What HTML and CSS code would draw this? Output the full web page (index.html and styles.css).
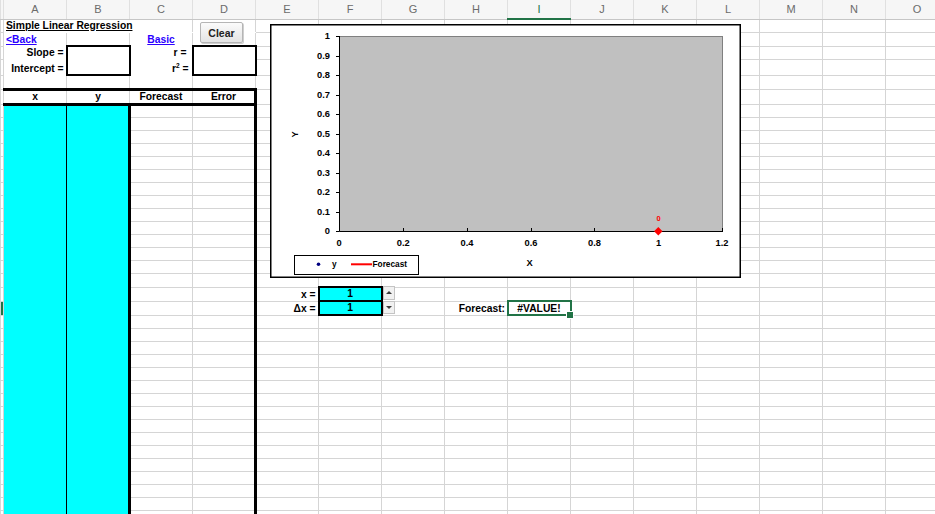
FILE: index.html
```html
<!DOCTYPE html>
<html lang="en">
<head>
<meta charset="utf-8">
<title>Simple Linear Regression</title>
<link rel="stylesheet" href="styles.css">
</head>
<body>
<div class="sheet">
<table class="grid">
<colgroup><col class="rh"><col class="c" span="15"></colgroup>
<thead>
<tr><th></th><th>A</th><th>B</th><th>C</th><th>D</th><th>E</th><th>F</th><th>G</th><th>H</th><th class="sel">I</th><th>J</th><th>K</th><th>L</th><th>M</th><th>N</th><th>O</th></tr>
</thead>
<tbody class="top">
<tr><td></td><td colspan="3" class="nb title">Simple Linear Regression</td><td class="nb"></td><td></td><td></td><td></td><td></td><td></td><td></td><td></td><td></td><td></td><td></td><td></td></tr>
<tr class="h14"><td></td><td class="nb"><a href="#">&lt;Back</a></td><td class="nb"></td><td class="nb ctr"><a href="#">Basic</a></td><td class="nb"></td><td></td><td></td><td></td><td></td><td></td><td></td><td></td><td></td><td></td><td></td><td></td></tr>
<tr><td></td><td class="nb rt">Slope =</td><td rowspan="2" class="box"></td><td class="nb rt rc">r =</td><td rowspan="2" class="box"></td><td></td><td></td><td></td><td></td><td></td><td></td><td></td><td></td><td></td><td></td><td></td></tr>
<tr class="r4"><td></td><td class="nb rt">Intercept =</td><td class="nb rt rc2">r<sup>2</sup> =</td><td></td><td></td><td></td><td></td><td></td><td></td><td></td><td></td><td></td><td></td><td></td></tr>
<tr class="h14"><td></td><td></td><td></td><td></td><td></td><td></td><td></td><td></td><td></td><td></td><td></td><td></td><td></td><td></td><td></td><td></td></tr>
<tr class="h14"><td></td><td class="ch">x</td><td class="ch">y</td><td class="ch">Forecast</td><td class="ch chr">Error</td><td></td><td></td><td></td><td></td><td></td><td></td><td></td><td></td><td></td><td></td><td></td></tr>
</tbody>
<tbody class="data">
<tr><td></td><td></td><td></td><td></td><td></td><td></td><td></td><td></td><td></td><td></td><td></td><td></td><td></td><td></td><td></td><td></td></tr>
<tr><td></td><td></td><td></td><td></td><td></td><td></td><td></td><td></td><td></td><td></td><td></td><td></td><td></td><td></td><td></td><td></td></tr>
<tr><td></td><td></td><td></td><td></td><td></td><td></td><td></td><td></td><td></td><td></td><td></td><td></td><td></td><td></td><td></td><td></td></tr>
<tr><td></td><td></td><td></td><td></td><td></td><td></td><td></td><td></td><td></td><td></td><td></td><td></td><td></td><td></td><td></td><td></td></tr>
<tr><td></td><td></td><td></td><td></td><td></td><td></td><td></td><td></td><td></td><td></td><td></td><td></td><td></td><td></td><td></td><td></td></tr>
<tr><td></td><td></td><td></td><td></td><td></td><td></td><td></td><td></td><td></td><td></td><td></td><td></td><td></td><td></td><td></td><td></td></tr>
<tr><td></td><td></td><td></td><td></td><td></td><td></td><td></td><td></td><td></td><td></td><td></td><td></td><td></td><td></td><td></td><td></td></tr>
<tr><td></td><td></td><td></td><td></td><td></td><td></td><td></td><td></td><td></td><td></td><td></td><td></td><td></td><td></td><td></td><td></td></tr>
<tr><td></td><td></td><td></td><td></td><td></td><td></td><td></td><td></td><td></td><td></td><td></td><td></td><td></td><td></td><td></td><td></td></tr>
<tr><td></td><td></td><td></td><td></td><td></td><td></td><td></td><td></td><td></td><td></td><td></td><td></td><td></td><td></td><td></td><td></td></tr>
<tr><td></td><td></td><td></td><td></td><td></td><td></td><td></td><td></td><td></td><td></td><td></td><td></td><td></td><td></td><td></td><td></td></tr>
<tr><td></td><td></td><td></td><td></td><td></td><td></td><td></td><td></td><td></td><td></td><td></td><td></td><td></td><td></td><td></td><td></td></tr>
<tr><td></td><td></td><td></td><td></td><td></td><td></td><td></td><td></td><td></td><td></td><td></td><td></td><td></td><td></td><td></td><td></td></tr>
<tr class="h14"><td></td><td></td><td></td><td></td><td></td><td></td><td></td><td></td><td></td><td></td><td></td><td></td><td></td><td></td><td></td><td></td></tr>
<tr class="h14"><td></td><td></td><td></td><td></td><td></td><td class="rt">x =</td><td class="val">1</td><td></td><td></td><td></td><td></td><td></td><td></td><td></td><td></td><td></td></tr>
<tr class="h14"><td class="selrow"></td><td></td><td></td><td></td><td></td><td class="rt">Δx =</td><td class="val">1</td><td></td><td class="rt">Forecast:</td><td class="cur">#VALUE!</td><td></td><td></td><td></td><td></td><td></td><td></td></tr>
<tr><td></td><td></td><td></td><td></td><td></td><td></td><td></td><td></td><td></td><td></td><td></td><td></td><td></td><td></td><td></td><td></td></tr>
<tr><td></td><td></td><td></td><td></td><td></td><td></td><td></td><td></td><td></td><td></td><td></td><td></td><td></td><td></td><td></td><td></td></tr>
<tr><td></td><td></td><td></td><td></td><td></td><td></td><td></td><td></td><td></td><td></td><td></td><td></td><td></td><td></td><td></td><td></td></tr>
<tr><td></td><td></td><td></td><td></td><td></td><td></td><td></td><td></td><td></td><td></td><td></td><td></td><td></td><td></td><td></td><td></td></tr>
<tr><td></td><td></td><td></td><td></td><td></td><td></td><td></td><td></td><td></td><td></td><td></td><td></td><td></td><td></td><td></td><td></td></tr>
<tr><td></td><td></td><td></td><td></td><td></td><td></td><td></td><td></td><td></td><td></td><td></td><td></td><td></td><td></td><td></td><td></td></tr>
<tr><td></td><td></td><td></td><td></td><td></td><td></td><td></td><td></td><td></td><td></td><td></td><td></td><td></td><td></td><td></td><td></td></tr>
<tr><td></td><td></td><td></td><td></td><td></td><td></td><td></td><td></td><td></td><td></td><td></td><td></td><td></td><td></td><td></td><td></td></tr>
<tr><td></td><td></td><td></td><td></td><td></td><td></td><td></td><td></td><td></td><td></td><td></td><td></td><td></td><td></td><td></td><td></td></tr>
<tr><td></td><td></td><td></td><td></td><td></td><td></td><td></td><td></td><td></td><td></td><td></td><td></td><td></td><td></td><td></td><td></td></tr>
<tr><td></td><td></td><td></td><td></td><td></td><td></td><td></td><td></td><td></td><td></td><td></td><td></td><td></td><td></td><td></td><td></td></tr>
<tr><td></td><td></td><td></td><td></td><td></td><td></td><td></td><td></td><td></td><td></td><td></td><td></td><td></td><td></td><td></td><td></td></tr>
<tr><td></td><td></td><td></td><td></td><td></td><td></td><td></td><td></td><td></td><td></td><td></td><td></td><td></td><td></td><td></td><td></td></tr>
<tr><td></td><td></td><td></td><td></td><td></td><td></td><td></td><td></td><td></td><td></td><td></td><td></td><td></td><td></td><td></td><td></td></tr>
<tr><td></td><td></td><td></td><td></td><td></td><td></td><td></td><td></td><td></td><td></td><td></td><td></td><td></td><td></td><td></td><td></td></tr>
<tr><td></td><td></td><td></td><td></td><td></td><td></td><td></td><td></td><td></td><td></td><td></td><td></td><td></td><td></td><td></td><td></td></tr>
<tr class="cut"><td></td><td></td><td></td><td></td><td></td><td></td><td></td><td></td><td></td><td></td><td></td><td></td><td></td><td></td><td></td><td></td></tr>
</tbody>
</table>

<button class="clear" type="button">Clear</button>

<div class="chart">
<svg width="471" height="254" viewBox="0 0 471 254">
<rect class="frame" x="0.75" y="0.75" width="469.5" height="252.5"/>
<rect class="plot" x="69.5" y="12.5" width="383" height="195"/>
<path class="axis" d="M69.5 12V207.5H453"/>
<path class="tick" d="M66 12.5H69M66 32.5H69M66 51.5H69M66 71.5H69M66 90.5H69M66 110.5H69M66 129.5H69M66 149.5H69M66 168.5H69M66 188.5H69M66 207.5H69M133.5 204V207M197.5 204V207M261.5 204V207M324.5 204V207M388.5 204V207M452.5 204V207"/>
<g class="yl">
<text x="60" y="15.4">1</text>
<text x="60" y="34.9">0.9</text>
<text x="60" y="54.4">0.8</text>
<text x="60" y="73.9">0.7</text>
<text x="60" y="93.4">0.6</text>
<text x="60" y="112.9">0.5</text>
<text x="60" y="132.4">0.4</text>
<text x="60" y="151.9">0.3</text>
<text x="60" y="171.4">0.2</text>
<text x="60" y="190.9">0.1</text>
<text x="60" y="210.4">0</text>
</g>
<g class="xl">
<text x="69" y="222">0</text>
<text x="133.3" y="222">0.2</text>
<text x="197" y="222">0.4</text>
<text x="261" y="222">0.6</text>
<text x="324.5" y="222">0.8</text>
<text x="388.5" y="222">1</text>
<text x="452" y="222">1.2</text>
</g>
<text class="ttl" x="259.7" y="242">X</text>
<text class="ttl" transform="translate(28.3,110.5) rotate(-90)">Y</text>
<polygon class="mk" points="388.3,203 392.5,207.3 388.3,211.6 384.1,207.3"/>
<text class="dl" x="388.6" y="196.5">0</text>
<rect class="legend" x="24.5" y="231.5" width="124" height="19"/>
<circle class="dot" cx="48.5" cy="240.3" r="1.8"/>
<text class="lg" x="62" y="243.2">y</text>
<path class="fline" d="M81 240.3H102"/>
<text class="lg" x="102.5" y="243.2">Forecast</text>
</svg>
</div>

<div class="spin"><span class="up"></span><span class="dn"></span></div>
</div>
</body>
</html>
```

FILE: styles.css
```css
* { box-sizing: border-box; }
html, body { margin: 0; padding: 0; background: #fff; }
body {
  width: 935px;
  height: 514px;
  overflow: hidden;
  font-family: "Liberation Sans", Arial, sans-serif;
}
.sheet { position: relative; width: 948px; }

.grid {
  border-collapse: collapse;
  table-layout: fixed;
  width: 948px;
}
.grid col.rh { width: 3px; }
.grid col.c { width: 63px; }

.grid th {
  height: 19px;
  padding: 0;
  font-family: "Liberation Sans", Arial, sans-serif;
  font-size: 11px;
  font-weight: normal;
  color: #6b6b6b;
  background: #f6f6f6;
  border: 1px solid #e0e0e0;
  border-top: 0;
  border-bottom-color: #c6c6c6;
  text-align: center;
  vertical-align: middle;
}
.grid th.sel { color: #217346; border-bottom: 2px solid #217346; }

.grid tr { height: 13px; }
.grid tr.h14 { height: 14px; }
.grid tr.r4 { height: 16px; }
.grid tr.cut { height: 4px; }
.grid tr.cut td { line-height: 0; font-size: 0; border-bottom: 0; }

.grid td {
  padding: 0 2px;
  border: 1px solid #d5d5d5;
  font-size: 10.3px;
  font-weight: bold;
  line-height: 12px;
  vertical-align: bottom;
  white-space: nowrap;
  overflow: hidden;
  color: #000;
}
.grid td:first-child { padding: 0; }
.grid td.nb { border-bottom-color: #fff; }
.grid td.title { text-decoration: underline; }
.grid td.rt { text-align: right; }
.grid td.rc { padding-right: 5px; }
.grid td.rc2 { padding-right: 3px; }
.grid td.ctr { text-align: center; }
.grid a { color: #2b00ff; text-decoration: underline; }
.grid sup { font-size: 6.5px; line-height: 0; vertical-align: 4px; }
.grid td.box { border: 2px solid #000; }

.grid td.ch {
  text-align: center;
  border-top: 3px solid #000;
  border-bottom: 3px solid #000;
}
.grid td.chr { border-right: 3px solid #000; }

.data td:nth-child(2),
.data td:nth-child(3) {
  background: #00ffff;
  border-top-color: #00ffff;
  border-bottom-color: #00ffff;
}
.data td:nth-child(2) { border-right: 1px double #000; }
.data td:nth-child(3) { border-right: 3px solid #000; }
.data td:nth-child(5) { border-right: 3px solid #000; }

.grid td.val {
  background: #00ffff;
  border: 2px solid #000;
  text-align: center;
}
.grid td.selrow { background: #217346; }
.grid td.cur {
  text-align: center;
  outline: 2px solid #217346;
  outline-offset: -1px;
  position: relative;
  overflow: visible;
}
.grid td.cur::after {
  content: "";
  position: absolute;
  right: -4px;
  bottom: -4px;
  width: 6px;
  height: 6px;
  background: #217346;
  border: 1px solid #fff;
}

.clear {
  position: absolute;
  left: 200px;
  top: 22px;
  width: 43px;
  height: 21px;
  padding: 0;
  border: 1px solid #b5b5b5;
  border-radius: 2px;
  background: linear-gradient(#fbfbfb, #e4e4e4);
  box-shadow: 1px 1px 0 #cfcfcf;
  font-family: "Liberation Sans", Arial, sans-serif;
  font-size: 10.5px;
  font-weight: bold;
  color: #222;
}

.chart {
  position: absolute;
  left: 270px;
  top: 24px;
  width: 471px;
  height: 254px;
}
.chart svg { display: block; }
.chart text {
  font-family: "Liberation Sans", Arial, sans-serif;
  font-weight: bold;
  font-size: 9.3px;
  fill: #000;
}
.chart .yl text { text-anchor: end; }
.chart .xl text { text-anchor: middle; }
.chart .ttl { text-anchor: middle; }
.chart .frame { fill: #fff; stroke: #000; stroke-width: 1.5; }
.chart .plot { fill: #c0c0c0; stroke: #808080; stroke-width: 1; }
.chart .axis { fill: none; stroke: #000; stroke-width: 1; }
.chart .tick { fill: none; stroke: #000; stroke-width: 1; }
.chart .mk { fill: #ff0000; }
.chart .dl { font-size: 7.5px; fill: #ff0000; text-anchor: middle; }
.chart .legend { fill: #fff; stroke: #000; stroke-width: 1; }
.chart .dot { fill: #000080; }
.chart .lg { font-size: 8.3px; }
.chart .fline { stroke: #ff0000; stroke-width: 2; }

.spin {
  position: absolute;
  left: 383px;
  top: 286px;
  width: 12px;
  height: 28px;
  display: flex;
  flex-direction: column;
  gap: 1px;
}
.spin span {
  flex: 1;
  display: flex;
  align-items: center;
  justify-content: center;
  background: #f1f1f1;
  border: 1px solid #c4c4c4;
}
.spin .up::before {
  content: "";
  border-left: 3px solid transparent;
  border-right: 3px solid transparent;
  border-bottom: 3px solid #3a3a3a;
}
.spin .dn::before {
  content: "";
  border-left: 3px solid transparent;
  border-right: 3px solid transparent;
  border-top: 3px solid #3a3a3a;
}
```
